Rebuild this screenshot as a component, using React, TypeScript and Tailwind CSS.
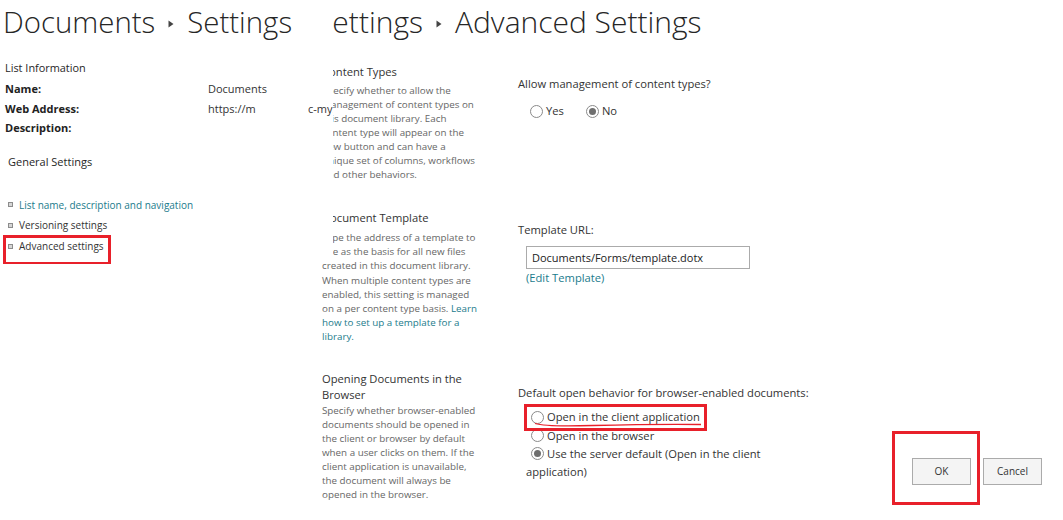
import React from "react";

const FONT = { fontFamily: '"Open Sans", "Liberation Sans", sans-serif' };

function Arrow() {
  return (
    <svg width="6" height="8" viewBox="0 0 6 8" className="mx-[13px] mt-[4px] shrink-0">
      <path d="M0.5 0.5 L5.5 4 L0.5 7.5 Z" fill="#444" />
    </svg>
  );
}

function Radio({ checked }: { checked?: boolean }) {
  return (
    <span className="inline-flex h-[13px] w-[13px] shrink-0 items-center justify-center rounded-full border border-[#8a8a8a] bg-white">
      {checked && <span className="h-[7px] w-[7px] rounded-full bg-[#6f6f6f]" />}
    </span>
  );
}

function Bullet() {
  return <span className="mr-[6px] inline-block h-[5px] w-[5px] shrink-0 border border-[#8c8c8c] bg-[#d6d6d6]" />;
}

function Lines({ lines, className }: { lines: React.ReactNode[]; className?: string }) {
  return (
    <div className={className}>
      {lines.map((l, i) => (
        <div key={i} className="whitespace-nowrap">
          {l}
        </div>
      ))}
    </div>
  );
}

const LINK = "text-[#1b7b8c]";

export default function App() {
  return (
    <div className="flex h-[520px] w-[1063px] overflow-hidden bg-white text-[#333]" style={FONT}>
      {/* Left page: Documents > Settings */}
      <div className="relative z-10 h-[264px] w-[333px] shrink-0 overflow-hidden bg-white pl-[3px]">
        <div className="flex h-[44px] items-center whitespace-nowrap text-[29.4px] font-light leading-[44px] text-[#262626]">
          <span>Documents</span>
          <Arrow />
          <span>Settings</span>
        </div>
        <div className="mt-[15px] pl-[2px] text-[10.9px] leading-[18px] text-[#262626]">List Information</div>
        <div className="mt-[2px] whitespace-nowrap pl-[2px] text-[11px] leading-[19.5px]">
          <div className="flex">
            <span className="w-[203px] shrink-0 font-bold text-[#222]">Name:</span>
            <span className="shrink-0 text-[#333]">Documents</span>
          </div>
          <div className="flex">
            <span className="w-[203px] shrink-0 font-bold text-[#222]">Web Address:</span>
            <span className="w-[100px] shrink-0 text-[#333]">https://m</span>
            <span className="shrink-0 text-[#333]">c-my.</span>
          </div>
          <div className="flex">
            <span className="w-[203px] shrink-0 font-bold text-[#222]">Description:</span>
          </div>
        </div>
        <div className="mt-[15px] pl-[5px] text-[11px] leading-[18px] text-[#262626]">General Settings</div>
        <div className="mt-[24px] whitespace-nowrap pl-[5px] text-[10px] leading-[20.5px]">
          <div className="flex items-center text-[#1b7b8c]">
            <Bullet />
            <span>List name, description and navigation</span>
          </div>
          <div className="flex items-center text-[#333]">
            <Bullet />
            <span>Versioning settings</span>
          </div>
          <div className="-ml-[5px] -mt-[1px] flex h-[30px] w-[108px] items-start border-[3px] border-[#e8202a] pl-[2px] text-[#333]">
            <div className="-mt-[1px] flex h-[20px] items-center">
              <Bullet />
              <span>Advanced settings</span>
            </div>
          </div>
        </div>
      </div>

      {/* Right page: Settings > Advanced Settings */}
      <div className="-ml-[33px] flex min-w-0 flex-1 flex-col">
        <div className="flex h-[44px] items-center whitespace-nowrap pl-[16px] text-[30px] font-light leading-[44px] text-[#262626]">
          <span>Settings</span>
          <Arrow />
          <span>Advanced Settings</span>
        </div>

        <div className="mt-[19px] flex flex-col pl-[22px]">
          {/* Content types */}
          <div className="flex">
            <div className="w-[196px] shrink-0">
              <div className="text-[11.2px] leading-[18px] text-[#333]">Content Types</div>
              <Lines
                className="mt-[3px] text-[9.8px] leading-[14px] text-[#666]"
                lines={[
                  "Specify whether to allow the",
                  "management of content types on",
                  "this document library. Each",
                  "content type will appear on the",
                  "new button and can have a",
                  "unique set of columns, workflows",
                  "and other behaviors.",
                ]}
              />
            </div>
            <div className="whitespace-nowrap pt-[12px] text-[11.2px] leading-[18px] text-[#333]">
              <div>Allow management of content types?</div>
              <div className="mt-[9px] flex items-center pl-[12px]">
                <Radio />
                <span className="ml-[3px]">Yes</span>
                <span className="ml-[22px]" />
                <Radio checked />
                <span className="ml-[3px]">No</span>
              </div>
            </div>
          </div>

          {/* Document template */}
          <div className="mt-[27px] flex">
            <div className="w-[196px] shrink-0">
              <div className="text-[11.2px] leading-[18px] text-[#333]">Document Template</div>
              <Lines
                className="mt-[4px] text-[9.8px] leading-[14.2px] text-[#666]"
                lines={[
                  "Type the address of a template to",
                  "use as the basis for all new files",
                  "created in this document library.",
                  "When multiple content types are",
                  "enabled, this setting is managed",
                  <>
                    on a per content type basis. <span className={LINK}>Learn</span>
                  </>,
                  <span className={LINK}>how to set up a template for a</span>,
                  <span className={LINK}>library.</span>,
                ]}
              />
            </div>
            <div className="whitespace-nowrap pt-[12px] text-[11.2px] leading-[18px] text-[#333]">
              <div>Template URL:</div>
              <div className="mt-[7px] ml-[8px] flex h-[23px] w-[224px] items-center border border-[#ababab] pl-[5px] text-[11px] text-[#222]">
                Documents/Forms/template.dotx
              </div>
              <div className={`ml-[8px] ${LINK}`}>(Edit Template)</div>
            </div>
          </div>

          {/* Opening documents */}
          <div className="mt-[26px] flex">
            <div className="w-[196px] shrink-0">
              <Lines
                className="text-[11.2px] leading-[16px] text-[#333]"
                lines={["Opening Documents in the", "Browser"]}
              />
              <Lines
                className="mt-[1px] text-[9.8px] leading-[14px] text-[#666]"
                lines={[
                  "Specify whether browser-enabled",
                  "documents should be opened in",
                  "the client or browser by default",
                  "when a user clicks on them. If the",
                  "client application is unavailable,",
                  "the document will always be",
                  "opened in the browser.",
                ]}
              />
            </div>
            <div className="w-[300px] shrink-0 whitespace-nowrap pt-[13px] text-[11.2px] leading-[18px] text-[#333]">
              <div>Default open behavior for browser-enabled documents:</div>
              <div className="relative mt-[2px] ml-[6px] flex h-[27px] w-[183px] items-center border-[3px] border-[#e8202a] pl-[4px]">
                <Radio />
                <span className="ml-[3px]">Open in the client application</span>
                <svg className="absolute left-[6px] top-[14px]" width="170" height="8" viewBox="0 0 170 8">
                  <path d="M2 2.5 C 12 5.5, 30 5.5, 60 4.5 C 100 3.5, 140 3.2, 168 3.5" stroke="#e8202a" strokeWidth="1.3" fill="none" />
                </svg>
              </div>
              <div className="-mt-[4px] flex items-center pl-[13px]">
                <Radio />
                <span className="ml-[3px]">Open in the browser</span>
              </div>
              <div className="flex items-center pl-[13px]">
                <Radio checked />
                <span className="ml-[3px]">Use the server default (Open in the client</span>
              </div>
              <div className="pl-[8px]">application)</div>
            </div>
            <div className="ml-auto mr-[21px] flex items-start pt-[60px]">
              <div className="flex h-[74px] w-[88px] items-start border-[3px] border-[#e8202a] pl-[17px] pt-[24px]">
                <button className="h-[27px] w-[59px] border border-[#ababab] bg-[#f4f4f4] text-[10px] text-[#333]">OK</button>
              </div>
              <button className="ml-[3px] mt-[27px] h-[27px] w-[59px] border border-[#ababab] bg-[#f4f4f4] text-[10px] text-[#333]">Cancel</button>
            </div>
          </div>
        </div>
      </div>
    </div>
  );
}
